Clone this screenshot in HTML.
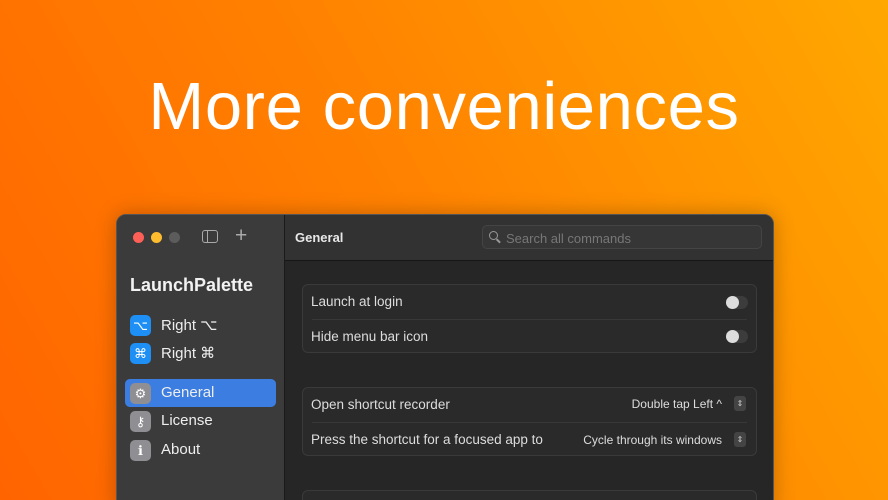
<!DOCTYPE html>
<html><head><style>
*{margin:0;padding:0;box-sizing:border-box}
html,body{width:888px;height:500px;overflow:hidden}
body{font-family:"Liberation Sans",sans-serif;background:linear-gradient(60deg,#ff6400 0%,#ff8200 50%,#ffa800 100%);position:relative}
h1{position:absolute;top:68px;left:0;width:888px;text-align:center;color:#fff;font-weight:400;font-size:67px;letter-spacing:0.6px}
.win{position:absolute;left:116px;top:214px;width:658px;height:300px;border-radius:10px;overflow:hidden;background:#262626;border:1px solid #555;box-shadow:0 0 20px rgba(0,0,0,.25)}
.side{position:absolute;left:0;top:0;width:168px;height:100%;background:#3b3b3b;border-right:1px solid #1a1a1a}
.hdr{position:absolute;left:168px;top:0;right:0;height:46px;background:#323232;border-bottom:1px solid #171717}
.dot{position:absolute;top:17px;width:11px;height:11px;border-radius:50%}
.item{position:absolute;left:8px;width:151px;height:28px;border-radius:5px}
.ic{position:absolute;left:5px;top:4px;width:21px;height:21px;border-radius:5px;color:#fff;font-size:13px;text-align:center;line-height:21px}
.lab{position:absolute;left:36px;top:5px;color:#eee;font-size:15px}
.grp{position:absolute;left:185px;width:455px;height:69px;border:1px solid #3a3a3a;border-radius:6px;background:#2a2a2a}
.row{position:absolute;left:8px;color:#ddd;font-size:13.5px}
.sep{position:absolute;left:9px;right:9px;top:34px;border-top:1px solid #383838}
.tog{position:absolute;right:8px;width:22px;height:13px;border-radius:7px;background:#3c3c3c}
.tog:after{content:"";position:absolute;left:0;top:0;width:13px;height:13px;border-radius:50%;background:#ddd}
.step{position:absolute;right:10px;width:12px;height:15px;border-radius:3px;background:#444;color:#ccc;font-size:8px;text-align:center;line-height:15px}
.val{position:absolute;color:#ddd;font-size:12px}
</style></head><body>
<h1>More conveniences</h1>
<div class="win">
<div class="side">
<div class="dot" style="left:16px;background:#fe5f57"></div>
<div class="dot" style="left:34px;background:#febc2e"></div>
<div class="dot" style="left:52px;background:#5c5c5c"></div>
<div style="position:absolute;left:85px;top:15px;width:16px;height:13px;border:1.5px solid #aaa;border-radius:3px"><div style="width:5px;height:100%;border-right:1.5px solid #aaa"></div></div>
<div style="position:absolute;left:118px;top:9px;color:#aaa;font-size:21px">+</div>
<div style="position:absolute;left:13px;top:60px;color:#f2f2f2;font-size:18px;font-weight:bold">LaunchPalette</div>
<div class="item" style="top:96px"><div class="ic" style="background:#1e8ff5">⌥</div><div class="lab">Right ⌥</div></div>
<div class="item" style="top:124px"><div class="ic" style="background:#1e8ff5">⌘</div><div class="lab">Right ⌘</div></div>
<div class="item" style="top:164px;background:#3b7de0"><div class="ic" style="background:#8e8e93">⚙</div><div class="lab">General</div></div>
<div class="item" style="top:192px"><div class="ic" style="background:#8e8e93">⚷</div><div class="lab">License</div></div>
<div class="item" style="top:221px"><div class="ic" style="background:#8e8e93">ℹ</div><div class="lab">About</div></div>
</div>
<div class="hdr">
<div style="position:absolute;left:10px;top:15px;color:#e8e8e8;font-size:13px;font-weight:bold">General</div>
<div style="position:absolute;left:197px;top:10px;width:280px;height:24px;border:1px solid #444;border-radius:5px;background:#363636">
<div style="position:absolute;left:6px;top:5px;width:9px;height:9px;border:1.5px solid #999;border-radius:50%"></div>
<div style="position:absolute;left:13px;top:14px;width:5px;height:1.5px;background:#999;transform:rotate(45deg)"></div>
<div style="position:absolute;left:23px;top:5px;color:#777;font-size:13px">Search all commands</div></div>
</div>
<div class="grp" style="top:69px">
<div class="row" style="top:9px">Launch at login</div><div class="tog" style="top:11px"></div>
<div class="sep"></div>
<div class="row" style="top:44px">Hide menu bar icon</div><div class="tog" style="top:45px"></div>
</div>
<div class="grp" style="top:172px">
<div class="row" style="top:9px">Open shortcut recorder</div>
<div class="val" style="right:34px;top:9px">Double tap Left ^</div><div class="step" style="top:8px">⇕</div>
<div class="sep"></div>
<div class="row" style="top:44px">Press the shortcut for a focused app to</div>
<div class="val" style="right:34px;top:45px">Cycle through its windows</div><div class="step" style="top:44px">⇕</div>
</div>
<div class="grp" style="top:275px"></div>
</div>
</body></html>
